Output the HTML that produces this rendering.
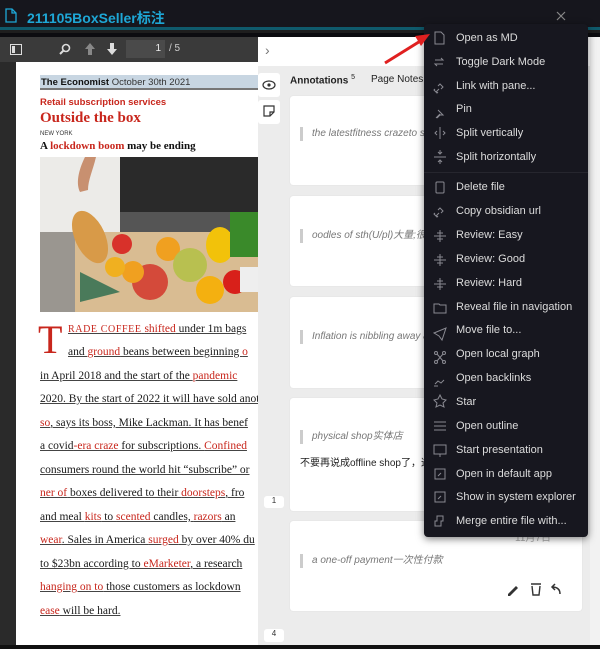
<!DOCTYPE html>
<html><head><meta charset="utf-8"><style>
*{margin:0;padding:0;box-sizing:border-box}
body{width:600px;height:649px;overflow:hidden;background:#1e1e1e;font-family:"Liberation Sans","Noto Sans CJK SC",sans-serif;position:relative}
.abs{position:absolute}
.title{left:0;top:0;width:600px;height:30px;background:#16161d;border-bottom:3px solid #0f5a6c}
.title span{position:absolute;left:27px;top:8px;color:#1ea7d6;font-weight:bold;font-size:14px}
.tb{left:0;top:33px;width:600px;height:4px;background:#0c0c10}
.toolbar{left:0;top:37px;width:266px;height:25px;background:#3a3a3a}
.pdfbg{left:0;top:62px;width:266px;height:587px;background:#2a2a2a}
.page{left:16px;top:62px;width:250px;height:583px;background:#fff;overflow:hidden}
.serif{font-family:"Liberation Serif","Noto Serif CJK SC",serif}
.line{position:absolute;left:24px;font-size:11.5px;color:#1a1a1a;white-space:nowrap;text-decoration:underline;text-decoration-color:#444}
.r{color:#c8261c}
.rp{left:258px;top:37px;width:342px;height:612px;background:#ececec}
.card{position:absolute;left:290px;width:292px;background:#fff;border-radius:3px;box-shadow:0 0 1px #ccc}
.q{position:absolute;left:10px;font-style:italic;color:#777;font-size:10px;border-left:3px solid #ccc;padding-left:9px;white-space:nowrap;height:14px;line-height:14px}
.menu{left:424px;top:24px;width:164px;height:513px;background:#17171f;border-radius:4px;box-shadow:0 2px 8px rgba(0,0,0,.5)}
.mi{position:absolute;left:32px;font-size:11px;color:#dcdcdc;white-space:nowrap}
</style></head><body>
<div class="abs title"><svg class="abs" style="left:5px;top:8px" width="12" height="15" viewBox="0 0 12 15"><path d="M1 1h6l4 4v9H1z M7 1v4h4" fill="none" stroke="#1ea7d6" stroke-width="1.3"/></svg><span>211105BoxSeller标注</span>
<svg class="abs" style="left:556px;top:11px" width="10" height="10"><path d="M1 1l8 8M9 1l-8 8" stroke="#888" stroke-width="1.2"/></svg></div>
<div class="abs tb"></div>
<div class="abs toolbar">
<svg class="abs" style="left:10px;top:7px" width="12" height="11"><rect x=".5" y=".5" width="11" height="10" fill="none" stroke="#ddd"/><rect x="2" y="2" width="3" height="7" fill="#ddd"/></svg>
<svg class="abs" style="left:59px;top:6px" width="12" height="12"><circle cx="7" cy="5" r="3.5" fill="none" stroke="#ddd" stroke-width="1.6"/><path d="M4.5 7.5L1 11" stroke="#ddd" stroke-width="2"/></svg>
<svg class="abs" style="left:84px;top:5px" width="12" height="14"><path d="M6 1L1 7h3v6h4V7h3z" fill="#888"/></svg>
<svg class="abs" style="left:106px;top:5px" width="12" height="14"><path d="M6 13L1 7h3V1h4v6h3z" fill="#ddd"/></svg>
<div class="abs" style="left:126px;top:3px;width:39px;height:18px;background:#4a4a4a;color:#eee;font-size:10px;text-align:right;padding:3px 4px">1</div>
<div class="abs" style="left:169px;top:6px;color:#ccc;font-size:10px">/ 5</div>
</div>
<div class="abs pdfbg"></div>
<div class="abs page">
<div class="abs" style="left:24px;top:13px;width:226px;height:15px;background:#c8d6e2;border-bottom:2px solid #777"></div>
<div class="abs" style="left:25px;top:15px;font-size:9.5px;font-weight:bold;color:#111">The Economist <span style="font-weight:normal;color:#333">October 30th 2021</span></div>
<div class="abs r" style="left:24px;top:35px;font-size:9.5px;font-weight:bold">Retail subscription services</div>
<div class="abs r serif" style="left:24px;top:48px;font-size:15px;font-weight:bold">Outside the box</div>
<div class="abs" style="left:24px;top:69px;font-size:6px;color:#333">NEW YORK</div>
<div class="abs serif" style="left:24px;top:78px;font-size:11px;color:#111;font-weight:bold">A <span class="r">lockdown boom</span> may be ending</div>
<svg class="abs" style="left:24px;top:95px" width="226" height="155">
<rect width="226" height="155" fill="#d8d4cc"/><rect x="0" y="0" width="80" height="75" fill="#ecebe8"/>
<rect x="80" y="0" width="146" height="70" fill="#2a2a2a"/><rect x="80" y="55" width="146" height="20" fill="#555"/>
<rect x="0" y="75" width="226" height="80" fill="#9a9690"/>
<rect x="35" y="75" width="191" height="80" fill="#d9bc92"/>
<path d="M45 0c-5 10-10 25-5 35l8-2c0-10 5-20 8-33z" fill="#c89070"/>
<ellipse cx="50" cy="80" rx="15" ry="28" transform="rotate(-25 50 80)" fill="#d89a48"/>
<circle cx="82" cy="87" r="10" fill="#d8312a"/><circle cx="128" cy="92" r="12" fill="#f0a020"/>
<circle cx="150" cy="108" r="17" fill="#b8c050"/><ellipse cx="180" cy="88" rx="14" ry="18" fill="#f2c20a"/>
<rect x="190" y="55" width="36" height="45" fill="#3a8a2a"/><circle cx="110" cy="125" r="18" fill="#d44a3a"/>
<circle cx="93" cy="115" r="11" fill="#f0a020"/><circle cx="170" cy="133" r="14" fill="#f4b010"/><circle cx="195" cy="125" r="12" fill="#d8201a"/>
<rect x="200" y="110" width="26" height="25" fill="#eee"/><path d="M40 115l40 20-40 10z" fill="#4a7a5a"/>
<circle cx="75" cy="110" r="10" fill="#f0b020"/>
</svg>
<div class="abs r serif" style="left:22px;top:258px;font-size:40px;line-height:40px">T</div>
<div class="line serif" style="left:52px;top:261px"><span class="r" style="font-size:10px;letter-spacing:.6px">RADE COFFEE</span> <span class="r">shifted</span> under 1m bags</div>
<div class="line serif" style="left:52px;top:284px">and <span class="r">ground</span> beans between beginning <span class="r">o</span></div>
<div class="line serif" style="top:308px">in April 2018 and the start of the <span class="r">pandemic</span></div>
<div class="line serif" style="top:331px">2020. By the start of 2022 it will have sold anot</div>
<div class="line serif" style="top:355px"><span class="r">so</span>, says its boss, Mike Lackman. It has benef</div>
<div class="line serif" style="top:378px">a covid<span class="r">-era craze</span> for subscriptions. <span class="r">Confined</span></div>
<div class="line serif" style="top:402px">consumers round the world hit “subscribe” or</div>
<div class="line serif" style="top:425px"><span class="r">ner of</span> boxes delivered to their <span class="r">doorsteps</span>, fro</div>
<div class="line serif" style="top:449px">and meal <span class="r">kits</span> to <span class="r">scented</span> candles, <span class="r">razors</span> an</div>
<div class="line serif" style="top:472px"><span class="r">wear</span>. Sales in America <span class="r">surged</span> by over 40% du</div>
<div class="line serif" style="top:496px">to $23bn according to <span class="r">eMarketer</span>, a research</div>
<div class="line serif" style="top:519px"><span class="r">hanging on to</span> those customers as lockdown</div>
<div class="line serif" style="top:543px"><span class="r">ease</span> will be hard.</div>
</div>
<div class="abs rp"></div>
<div class="abs" style="left:258px;top:37px;width:342px;height:29px;background:#fff"></div>
<div class="abs" style="left:265px;top:42px;color:#777;font-size:14px">›</div>
<div class="abs" style="left:258px;top:73px;width:22px;height:24px;background:#fff;border-radius:3px"></div>
<svg class="abs" style="left:262px;top:80px" width="14" height="10"><ellipse cx="7" cy="5" rx="6" ry="4" fill="none" stroke="#333" stroke-width="1.2"/><circle cx="7" cy="5" r="1.6" fill="#333"/></svg>
<div class="abs" style="left:258px;top:100px;width:22px;height:24px;background:#fff;border-radius:3px"></div>
<svg class="abs" style="left:263px;top:105px" width="12" height="12"><path d="M1 1h10v6l-4 4H1z M7 11V7h4" fill="none" stroke="#333" stroke-width="1.2"/></svg>
<div class="abs" style="left:290px;top:74px;font-size:10px;font-weight:bold;color:#222">Annotations <sup style="font-weight:normal;font-size:7px">5</sup></div>
<div class="abs" style="left:371px;top:74px;font-size:10px;color:#222">Page Notes</div>
<div class="card" style="top:96px;height:89px"><div class="q" style="top:31px">the latestfitness crazeto sw</div></div>
<div class="card" style="top:196px;height:90px"><div class="q" style="top:33px">oodles of sth(U/pl)大量;很</div></div>
<div class="card" style="top:297px;height:91px"><div class="q" style="top:33px">Inflation is nibbling away a</div></div>
<div class="card" style="top:398px;height:113px"><div class="q" style="top:32px">physical shop实体店</div><div class="abs" style="left:10px;top:56px;font-size:10px;color:#222;white-space:nowrap">不要再说成offline shop了，这</div></div>
<div class="card" style="top:521px;height:90px"><div class="abs" style="left:225px;top:8px;font-size:10px;color:#aaa">11月7日</div><div class="q" style="top:33px">a one-off payment一次性付款</div>
<svg class="abs" style="left:216px;top:61px" width="60" height="14"><path d="M2 12l8-8 2 2-8 8H2z" fill="#333"/><path d="M25 2h10M26 4l1 9h6l1-9" fill="none" stroke="#333" stroke-width="1.4"/><path d="M54 12c0-5-3-7-8-7M49 2l-3 3 3 3" fill="none" stroke="#333" stroke-width="1.5"/></svg></div>
<div class="abs" style="left:264px;top:496px;width:20px;height:12px;background:#fff;border-radius:3px;font-size:8px;text-align:center;color:#333">1</div>
<div class="abs" style="left:264px;top:629px;width:20px;height:13px;background:#fff;border-radius:3px;font-size:8px;text-align:center;color:#333">4</div>
<div class="abs" style="left:590px;top:37px;width:10px;height:612px;background:#f2f2f2"></div>
<div class="abs" style="left:0;top:645px;width:600px;height:4px;background:#111"></div>
<div class="abs menu">
<div class="mi" style="top:8px">Open as MD</div>
<div class="mi" style="top:32px">Toggle Dark Mode</div>
<div class="mi" style="top:56px">Link with pane...</div>
<div class="mi" style="top:79px">Pin</div>
<div class="mi" style="top:103px">Split vertically</div>
<div class="mi" style="top:127px">Split horizontally</div>
<div class="abs" style="left:0;top:148px;width:164px;height:1px;background:#26262e"></div>
<div class="mi" style="top:157px">Delete file</div>
<div class="mi" style="top:181px">Copy obsidian url</div>
<div class="mi" style="top:205px">Review: Easy</div>
<div class="mi" style="top:229px">Review: Good</div>
<div class="mi" style="top:253px">Review: Hard</div>
<div class="mi" style="top:277px">Reveal file in navigation</div>
<div class="mi" style="top:300px">Move file to...</div>
<div class="mi" style="top:324px">Open local graph</div>
<div class="mi" style="top:348px">Open backlinks</div>
<div class="mi" style="top:372px">Star</div>
<div class="mi" style="top:396px">Open outline</div>
<div class="mi" style="top:420px">Start presentation</div>
<div class="mi" style="top:444px">Open in default app</div>
<div class="mi" style="top:467px">Show in system explorer</div>
<div class="mi" style="top:491px">Merge entire file with...</div>
<svg class="abs" style="left:0;top:0" width="30" height="513" fill="none" stroke="#8a8a92" stroke-width="1">
<path d="M11 8h6l3 3v9h-9z"/>
<path d="M11 36h8l-2-2M19 40h-8l2 2"/>
<path d="M12 68l3-3M14 62l2-2 3 3-2 2M11 65l-1 1 3 3 1-1"/>
<path d="M12 94l4-4M14 86l5 5-3 0-3 3"/>
<path d="M16 103v12M13 107l-2 2 2 2M19 107l2 2-2 2"/>
<path d="M10 133h12M16 126v3M16 137v3M14 128l2 2 2-2M14 138l2-2 2 2"/>
<rect x="12" y="158" width="8" height="11" rx="1"/>
<path d="M12 192l3-3M14 186l2-2 3 3-2 2M11 189l-1 1 3 3 1-1"/>
<path d="M16 206v12M10 212h12M13 209h6M13 215h6"/>
<path d="M16 230v12M10 236h12M13 233h6M13 239h6"/>
<path d="M16 254v12M10 260h12M13 257h6M13 263h6"/>
<path d="M10 280h5l1 1h6v8H10z"/>
<path d="M10 309l12-5-4 12-3-4z"/>
<circle cx="12" cy="329" r="1.5"/><circle cx="20" cy="329" r="1.5"/><circle cx="12" cy="338" r="1.5"/><circle cx="20" cy="338" r="1.5"/><path d="M13 330l6 7M19 330l-6 7"/>
<path d="M11 360l3-3 3 2 3-3M10 362h4"/>
<path d="M16 371l2 4 4 1-3 3 1 4-4-2-4 2 1-4-3-3 4-1z"/>
<path d="M10 398h12M10 402h12M10 406h12"/>
<rect x="10" y="421" width="12" height="9"/><path d="M16 430v3"/>
<rect x="11" y="445" width="10" height="10"/><path d="M14 452l3-3"/>
<rect x="11" y="468" width="10" height="10"/><path d="M14 475l3-3"/>
<path d="M13 492h6v5h-2v5h-6v-5h2z"/>
</svg>
</div>
<svg class="abs" style="left:380px;top:28px" width="55" height="40"><path d="M5 35L42 12" stroke="#e02020" stroke-width="3"/><path d="M50 6L35 8l6 10z" fill="#e02020"/></svg>
</body></html>
